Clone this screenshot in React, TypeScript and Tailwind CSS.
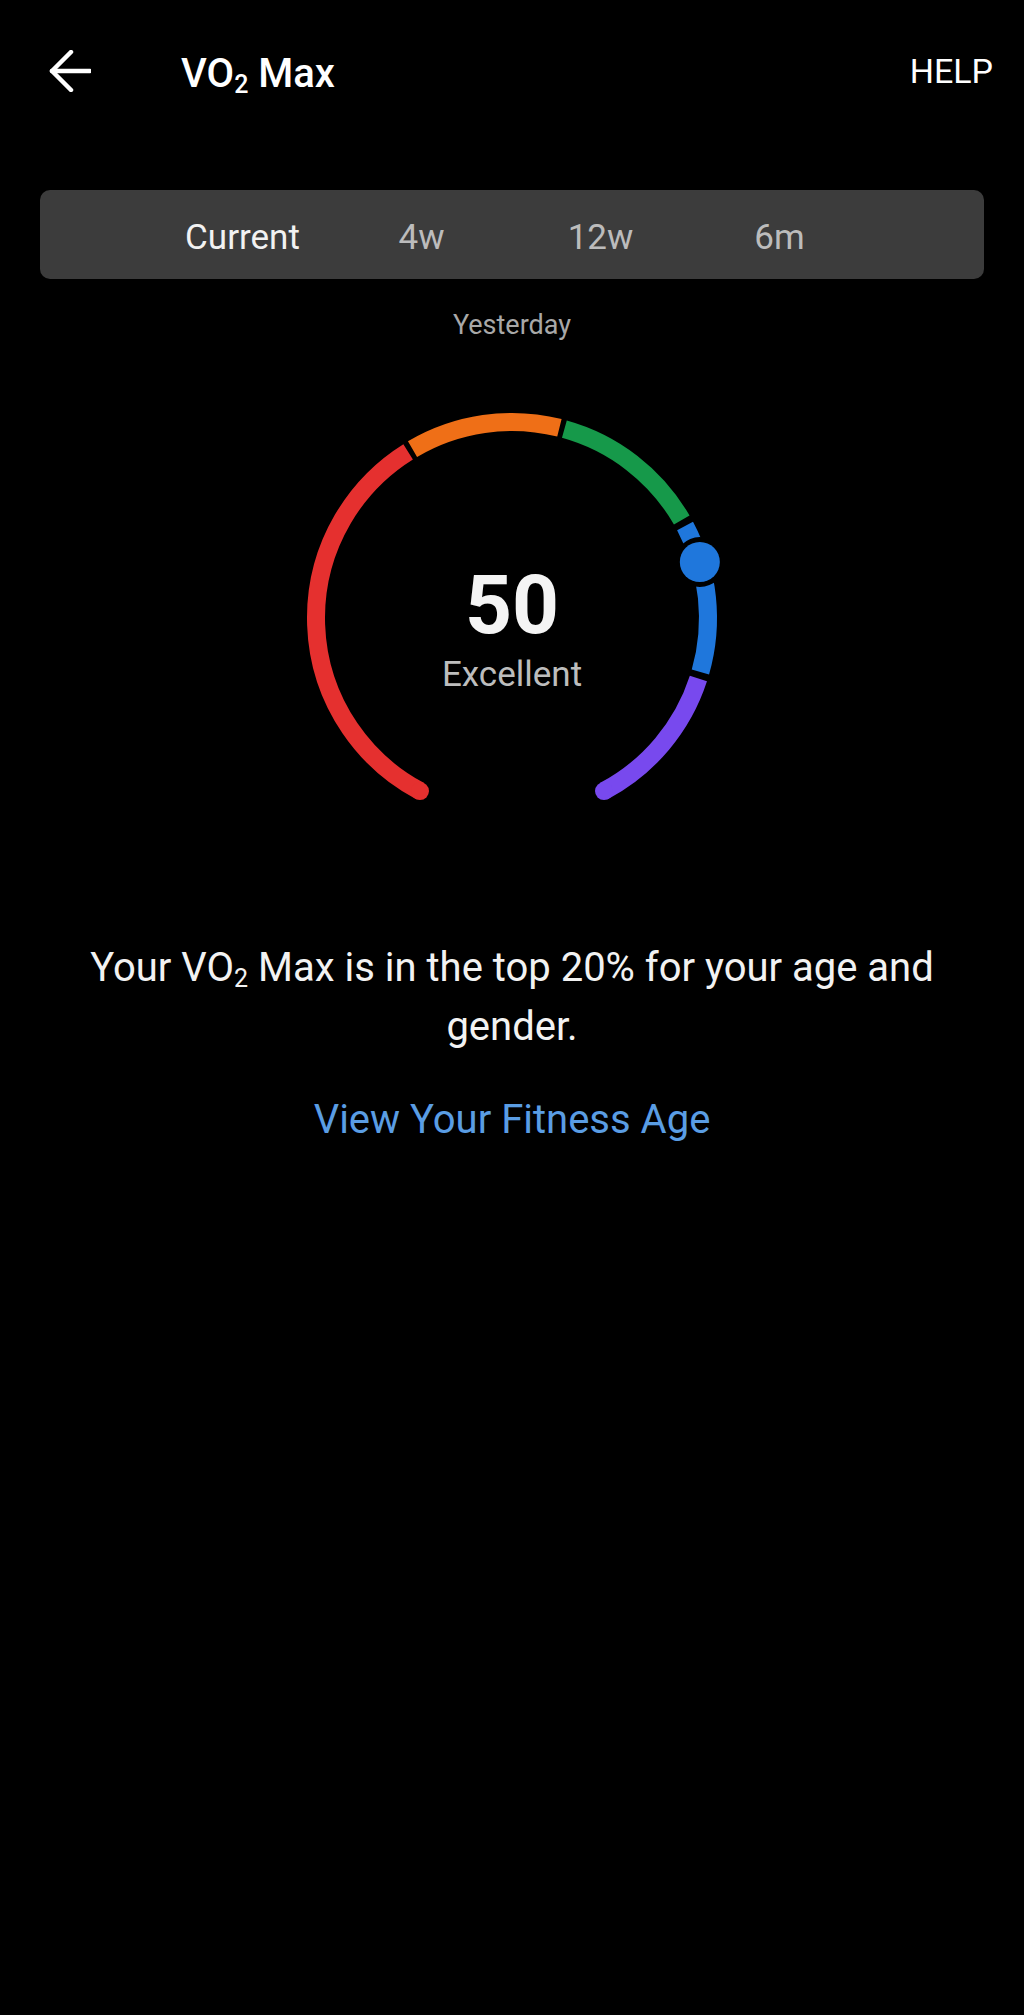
import React from "react";

const CX = 220;
const CY = 220;
const R = 196;
const STROKE = 18;

const point = (deg: number) => {
  const a = (deg * Math.PI) / 180;
  return [CX + R * Math.sin(a), CY - R * Math.cos(a)];
};

const arc = (from: number, to: number) => {
  const [x0, y0] = point(from);
  const [x1, y1] = point(to);
  const large = to - from > 180 ? 1 : 0;
  return `M ${x0} ${y0} A ${R} ${R} 0 ${large} 1 ${x1} ${y1}`;
};

const segments = [
  { from: -152, to: -32, color: "#e5302f" },
  { from: -30.5, to: 14, color: "#ef6f17" },
  { from: 15.5, to: 60, color: "#16994a" },
  { from: 62, to: 106, color: "#1f77dc" },
  { from: 108, to: 152, color: "#7849ee" },
];

function Gauge() {
  const [sx, sy] = point(-152);
  const [ex, ey] = point(152);
  const [dx, dy] = point(73.4);
  return (
    <div className="relative w-[440px] h-[440px]">
      <svg width="440" height="440" viewBox="0 0 440 440" className="absolute inset-0">
        {segments.map((s) => (
          <path
            key={s.from}
            d={arc(s.from, s.to)}
            fill="none"
            stroke={s.color}
            strokeWidth={STROKE}
          />
        ))}
        <circle cx={sx} cy={sy} r={STROKE / 2} fill="#e5302f" />
        <circle cx={ex} cy={ey} r={STROKE / 2} fill="#7849ee" />
        <circle cx={dx} cy={dy} r={25} fill="#000" />
        <circle cx={dx} cy={dy} r={20} fill="#1f77dc" />
      </svg>
      <div className="absolute inset-0 flex flex-col items-center justify-center pt-[22px]">
        <span className="text-[82px] leading-[84px] font-bold text-[#f4f4f4]">50</span>
        <span className="text-[35px] leading-[40px] text-[#bdbdbd] mt-[8px]">Excellent</span>
      </div>
    </div>
  );
}

export default function App() {
  const tabs = ["Current", "4w", "12w", "6m"];

  return (
    <div className="min-h-[2015px] w-full bg-black text-white font-['Roboto','Noto_Sans',sans-serif]">
      <div className="flex items-center h-[142px] pl-[49px] pr-[31px]">
        <svg width="42" height="42" viewBox="0 0 42 42" fill="none" stroke="#fff" strokeWidth="4.5" strokeLinecap="round" strokeLinejoin="round">
          <path d="M41 21H3" />
          <path d="M22 2 3 21l19 19" />
        </svg>
        <h1 className="ml-[90px] pt-[5px] text-[40px] font-medium leading-none">
          VO<sub className="text-[25px]">2</sub> Max
        </h1>
        <span className="ml-auto text-[34px] leading-none">HELP</span>
      </div>

      <div className="mx-[40px] mt-[48px] h-[89px] rounded-[10px] bg-[#3c3c3c] flex items-center pl-[113px] pt-[7px]">
        {tabs.map((t, i) => (
          <div
            key={t}
            className={
              i === 0
                ? "w-[179px] text-center text-[35px] text-[#f2f2f2]"
                : "w-[179px] text-center text-[35px] text-[#bcbcbc]"
            }
          >
            {t}
          </div>
        ))}
      </div>

      <p className="mt-[31px] text-center text-[27px] leading-[30px] text-[#a8a8a8]">Yesterday</p>

      <div className="flex justify-center mt-[58px]">
        <Gauge />
      </div>

      <p className="mt-[100px] px-[48px] text-center text-[40px] leading-[59px] text-[#f2f2f2]">
        Your VO<sub className="text-[25px]">2</sub> Max is in the top 20% for your age and gender.
      </p>

      <p className="mt-[40px] text-center text-[40px] leading-[48px] text-[#5a9de4]">View Your Fitness Age</p>
    </div>
  );
}
